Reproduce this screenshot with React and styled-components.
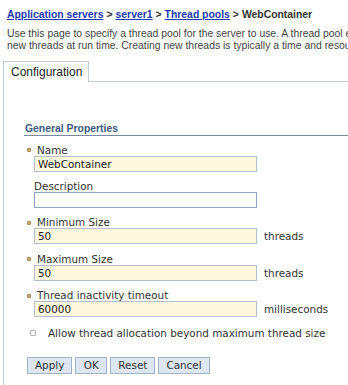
import React from "react";
import styled, { createGlobalStyle } from "styled-components";

const Global = createGlobalStyle`
  html, body { margin: 0; padding: 0; background: #fff; overflow: hidden; }
  * { box-sizing: border-box; }
`;

const Page = styled.div`
  width: 560px;
  padding-left: 3px;
  font-family: "Liberation Sans", Arial, sans-serif;
`;

const Breadcrumb = styled.div`
  margin-top: 8px;
  padding-left: 4px;
  font-size: 10.4px;
  font-weight: bold;
  line-height: 14px;
  color: #333;
  white-space: nowrap;
`;

const Crumb = styled.a`
  color: #2238b0;
  text-decoration: underline;
`;

const Sep = styled.span`
  color: #333;
  padding: 0 3px;
`;

const Intro = styled.div`
  margin-top: 6px;
  padding-left: 4px;
  font-size: 10.4px;
  line-height: 12.4px;
  color: #444;
  white-space: nowrap;
`;

const IntroLine = styled.div``;

const TabBar = styled.div`
  display: flex;
  align-items: flex-end;
  margin-top: 8px;
`;

const Tab = styled.div`
  height: 21px;
  width: 86px;
  padding: 3px 0 0 7px;
  border: 1px solid #c3cbd5;
  border-bottom: none;
  font-size: 12px;
  color: #222;
`;

const TabFiller = styled.div`
  flex: 1;
  border-bottom: 1px solid #c3cbd5;
`;

const Panel = styled.div`
  border-left: 1px solid #c3cbd5;
  padding: 40px 0 20px 20px;
`;

const Heading = styled.div`
  padding-left: 1px;
  font-size: 10.4px;
  font-weight: bold;
  line-height: 13px;
  color: #3c5a82;
  border-bottom: 1px solid #7888a0;
`;

const Fields = styled.div`
  padding-left: 10px;
  padding-top: 9px;
  font-family: "DejaVu Sans", sans-serif;
  font-size: 10.4px;
  color: #333;
`;

const Field = styled.div`
  margin-bottom: 9.3px;
`;

const Label = styled.div`
  display: flex;
  align-items: center;
  height: 11px;
  line-height: 11px;
  margin-left: ${(p) => (p.$required ? "-10px" : "0")};
`;

const StarBox = styled.span`
  display: inline-flex;
  justify-content: center;
  align-items: center;
  width: 9px;
  margin-right: 4px;
`;

const InputRow = styled.div`
  display: flex;
  align-items: center;
`;

const Input = styled.div`
  width: 223px;
  height: 16px;
  padding: 0 3px;
  line-height: 14px;
  border: 1px solid ${(p) => (p.$required ? "#b3bfcb" : "#8fa6c0")};
  background: ${(p) => (p.$required ? "#fff7de" : "#fff")};
  color: #222;
`;

const Unit = styled.span`
  margin-left: 7px;
  color: #333;
`;

const CheckRow = styled.div`
  display: flex;
  align-items: center;
  height: 12px;
  margin-top: 10px;
  margin-left: -4px;
`;

const Checkbox = styled.span`
  width: 6px;
  height: 6px;
  border: 1px solid #b8b8b8;
  border-radius: 1px;
  margin-right: 12px;
  background: #fafafa;
`;

const ButtonRow = styled.div`
  display: flex;
  gap: 3px;
  margin-top: 18px;
  margin-left: 3px;
`;

const Button = styled.button`
  height: 17px;
  min-width: ${(p) => p.$min || 0}px;
  padding: 0 7px;
  border: 1px solid #a3b3c7;
  background: #dde6f1;
  font-family: "DejaVu Sans", sans-serif;
  font-size: 10.4px;
  color: #333;
  line-height: 15px;
  margin: 0;
`;

const Star = () => (
  <svg width="6" height="6" viewBox="0 0 6 6">
    <circle cx="3" cy="3" r="2.2" fill="#a89058" />
    <circle cx="3" cy="3" r="1" fill="#c8b078" />
  </svg>
);

const fields = [
  { label: "Name", value: "WebContainer", required: true },
  { label: "Description", value: "", required: false },
  { label: "Minimum Size", value: "50", required: true, unit: "threads" },
  { label: "Maximum Size", value: "50", required: true, unit: "threads" },
  { label: "Thread inactivity timeout", value: "60000", required: true, unit: "milliseconds" },
];

export default function App() {
  return (
    <>
      <Global />
      <Page>
        <Breadcrumb>
          <Crumb>Application servers</Crumb>
          <Sep>&gt;</Sep>
          <Crumb>server1</Crumb>
          <Sep>&gt;</Sep>
          <Crumb>Thread pools</Crumb>
          <Sep>&gt;</Sep>
          WebContainer
        </Breadcrumb>
        <Intro>
          <IntroLine>
            Use this page to specify a thread pool for the server to use. A thread pool enables components of the server to reuse threads,
          </IntroLine>
          <IntroLine>
            new threads at run time. Creating new threads is typically a time and resource intensive operation.
          </IntroLine>
        </Intro>
        <TabBar>
          <Tab>Configuration</Tab>
          <TabFiller />
        </TabBar>
        <Panel>
          <Heading>General Properties</Heading>
          <Fields>
            {fields.map((f) => (
              <Field key={f.label}>
                <Label $required={f.required}>
                  {f.required && (
                    <StarBox>
                      <Star />
                    </StarBox>
                  )}
                  {f.label}
                </Label>
                <InputRow>
                  <Input $required={f.required}>{f.value}</Input>
                  {f.unit && <Unit>{f.unit}</Unit>}
                </InputRow>
              </Field>
            ))}
            <CheckRow>
              <Checkbox />
              Allow thread allocation beyond maximum thread size
            </CheckRow>
          </Fields>
          <ButtonRow>
            <Button>Apply</Button>
            <Button $min={32}>OK</Button>
            <Button>Reset</Button>
            <Button>Cancel</Button>
          </ButtonRow>
        </Panel>
      </Page>
    </>
  );
}
